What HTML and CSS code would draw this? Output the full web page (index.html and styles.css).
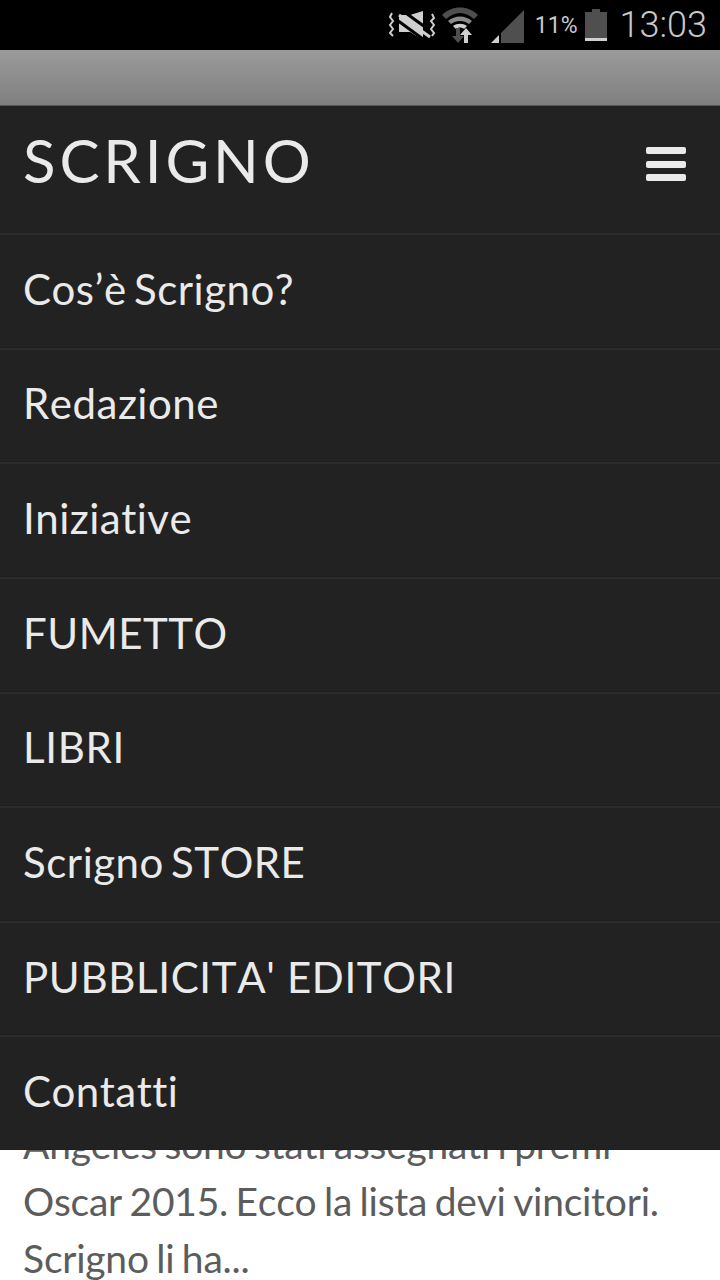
FILE: index.html
```html
<!DOCTYPE html>
<html lang="it">
<head>
<meta charset="utf-8">
<title>Scrigno</title>
<link rel="stylesheet" href="styles.css">
</head>
<body>
<div class="statusbar">
  <svg class="ic-mute" width="48" height="34" viewBox="0 0 48 34">
    <path class="ic-light" d="M11 7h11L35 3v29L22 24H11z"/>
    <path class="ic-cut-thin" d="M15 3l29 21"/>
    <path class="ic-cut-thin" d="M9 12l30 22"/>
    <path class="ic-line-b" d="M11 7l31 22"/>
    <path class="ic-wave" d="M4 5l-2 4 3 4-3 4 3 4-3 4 3 3M44 6l2 4-3 3 3 4-3 4 3 4-2 3"/>
  </svg>
  <svg class="ic-wifi" width="36" height="36" viewBox="0 0 36 36">
    <path class="ic-dark" d="M0 8C10-2 26-2 36 8l-4 4C23 4 13 4 4 12z"/>
    <path class="ic-mid" d="M6 14c7-6 17-6 24 0l-3 3c-5-4-13-4-18 0z"/>
    <path class="ic-light" d="M11 19c4-3 10-3 14 0l-3 3c-2-2-6-2-8 0z"/>
    <path class="ic-dark" d="M14 21h4v8h4l-6 7-6-7h4z"/>
    <path class="ic-light" d="M24 21l6 7h-4v8h-4v-8h-4z"/>
  </svg>
  <svg class="ic-signal" width="33" height="33" viewBox="0 0 33 33">
    <path class="ic-light" d="M0 33l8-8v8z"/>
    <path class="ic-dark" d="M10 23L33 0v33H10z"/>
  </svg>
  <span class="st-pct">11%</span>
  <svg class="ic-batt" width="22" height="32" viewBox="0 0 22 32">
    <path class="ic-dark" d="M7 0h8v3h7v26H0V3h7z"/>
    <path class="ic-light" d="M0 29h22v3H0z"/>
  </svg>
  <span class="st-time">13:03</span>
</div>
<div class="band"></div>
<main class="page">
  <nav class="menu">
    <div class="menu-head">
      <span class="brand">SCRIGNO</span>
      <span class="burger"><i></i><i></i><i></i></span>
    </div>
    <a class="menu-item">Cos’è Scrigno?</a>
    <a class="menu-item">Redazione</a>
    <a class="menu-item">Iniziative</a>
    <a class="menu-item">FUMETTO</a>
    <a class="menu-item caps">LIBRI</a>
    <a class="menu-item">Scrigno STORE</a>
    <a class="menu-item caps">PUBBLICITA' EDITORI</a>
    <a class="menu-item">Contatti</a>
  </nav>
  <p class="excerpt">Angeles sono stati assegnati i premi<br>Oscar 2015. Ecco la lista devi vincitori.<br>Scrigno li ha...</p>
</main>
</body>
</html>
```
FILE: styles.css
```css
* { box-sizing: border-box; }
html, body { margin: 0; padding: 0; }
body { width: 720px; height: 1280px; overflow: hidden; background: #fff; font-family: "Lato", sans-serif; font-kerning: none; }

.statusbar { height: 50px; background: #000; color: #c9c9c9; display: flex; align-items: center; justify-content: flex-end; padding-right: 13px; font-family: "Roboto", sans-serif; font-weight: 300; }
.statusbar svg { display: block; flex: none; }
.ic-light { fill: #cfcfcf; }
.ic-mid { fill: #8a8a8a; }
.ic-dark { fill: #4f4f4f; }
.ic-cut-thin { stroke: #000; stroke-width: 3; fill: none; }
.ic-line-b { stroke: #cfcfcf; stroke-width: 3; fill: none; }
.ic-wave { stroke: #cfcfcf; stroke-width: 2; fill: none; }
.ic-mute { margin: 0 6px 0 0; }
.ic-wifi { margin: 0 13px 0 0; }
.ic-signal { margin: 3px 11px 0 0; }
.st-pct { font-size: 23px; font-weight: 400; margin-right: 7px; }
.ic-batt { margin-right: 13px; }
.st-time { font-size: 36px; }

.band { height: 55px; background: linear-gradient(#9b9b9b, #7f7f7f); }

.page { position: relative; height: 1175px; }
.menu { position: absolute; left: 0; right: 0; top: 0; z-index: 2; height: 1045px; background: #222; border-top: 1px solid #555; color: #eaeaea; display: flex; flex-direction: column; }
.menu-head { height: 127px; flex: none; display: flex; align-items: flex-start; justify-content: space-between; padding: 18px 34px 0 23px; }
.brand { font-size: 60px; line-height: 72px; letter-spacing: 3.85px; }
.burger { display: flex; flex-direction: column; gap: 6.5px; margin-top: 23px; }
.burger i { display: block; width: 40px; height: 7px; border-radius: 2px; background: #eaeaea; }
.menu-item { flex: 1; display: flex; align-items: center; padding: 0 0 4px 23px; font-size: 42px; letter-spacing: 0.5px; word-spacing: -4px; border-top: 2px solid #2c2c2c; border-bottom: 1px solid #1e1e1e; }
.caps { letter-spacing: 0.65px; word-spacing: 0; }

.excerpt { margin: 0; padding: 1011px 0 0 23px; font-size: 39px; line-height: 57px; color: #5c5c5c; white-space: nowrap; letter-spacing: -0.25px; word-spacing: -2.2px; }
```
